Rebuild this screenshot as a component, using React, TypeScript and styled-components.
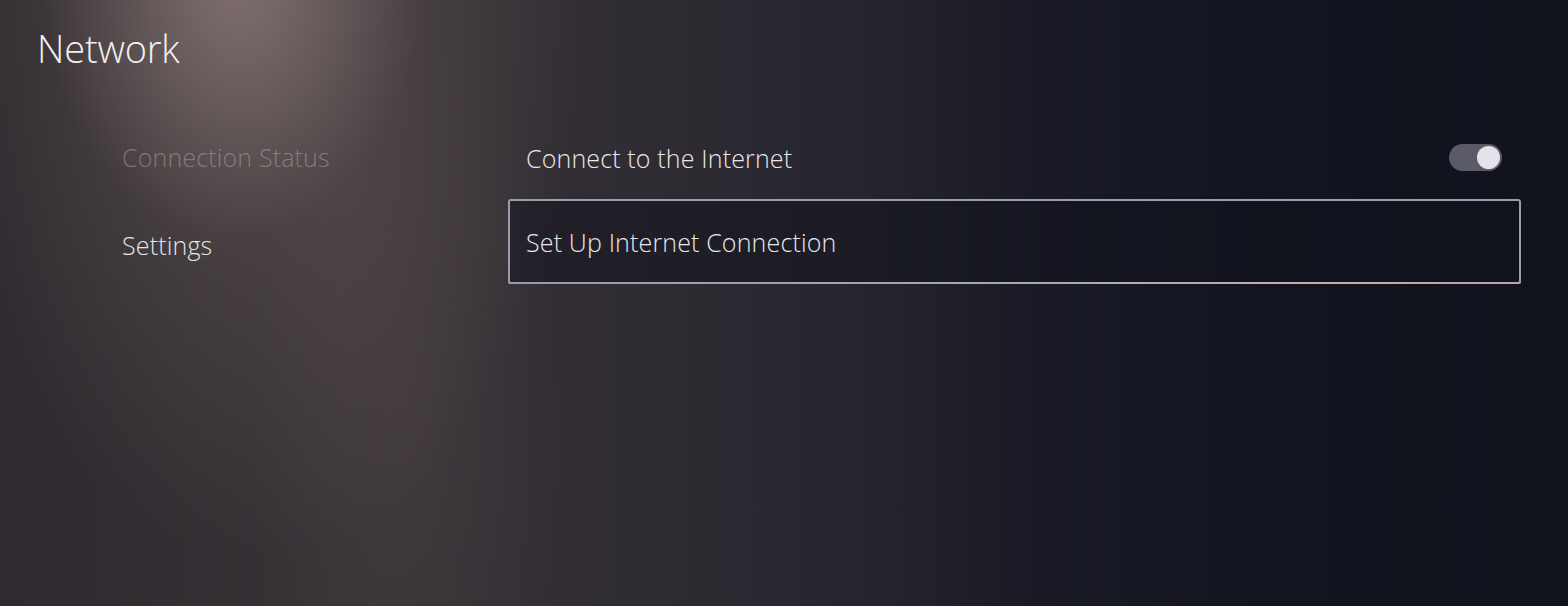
import React from "react";
import styled, { createGlobalStyle } from "styled-components";

const Global = createGlobalStyle`
  html, body { margin: 0; padding: 0; }
  body { background: #11131e; }
`;

const Screen = styled.div`
  width: 1568px;
  height: 606px;
  overflow: hidden;
  box-sizing: border-box;
  font-family: "Open Sans", "Noto Sans", sans-serif;
  font-weight: 300;
  color: #ecebee;
  padding: 22px 0 0 37px;
  background:
    radial-gradient(ellipse 190px 260px at 232px -20px, rgba(160, 140, 136, 0.55), rgba(160, 140, 136, 0) 100%),
    radial-gradient(ellipse 330px 560px at 260px 0px, rgba(120, 104, 102, 0.5), rgba(120, 104, 102, 0) 100%),
    radial-gradient(ellipse 160px 420px at 410px 430px, rgba(90, 78, 80, 0.3), rgba(90, 78, 80, 0) 100%),
    linear-gradient(90deg, #2e2a2f 0%, #373236 22%, #302c33 40%, #25252e 55%, #191a25 66%, #12141f 82%, #10121c 100%);
`;

const Title = styled.h1`
  margin: 0;
  font-size: 38px;
  font-weight: 300;
  line-height: 52px;
  letter-spacing: -0.2px;
  color: #f1eff1;
`;

const Body = styled.div`
  display: grid;
  grid-template-columns: 386px 1013px;
  margin-top: 41px;
  padding-left: 85px;
`;

const Nav = styled.nav`
  display: flex;
  flex-direction: column;
  padding-top: 16px;
`;

const NavItem = styled.div<{ $dim?: boolean }>`
  height: 88px;
  font-size: 25px;
  line-height: 52px;
  letter-spacing: 0.15px;
  color: ${(p) => (p.$dim ? "rgba(200, 192, 194, 0.42)" : "#e6e4e8")};
`;

const List = styled.div`
  display: flex;
  flex-direction: column;
`;

const Row = styled.div<{ $focused?: boolean }>`
  position: relative;
  height: 85px;
  box-sizing: border-box;
  display: flex;
  align-items: center;
  justify-content: space-between;
  padding: 0 17px 0 16px;
  font-size: 25px;
  letter-spacing: 0.15px;
  color: #e8e7ec;
  border-radius: 3px;
  border: 2px solid ${(p) => (p.$focused ? "#9c9caa" : "transparent")};
  background: ${(p) => (p.$focused ? "rgba(16, 18, 28, 0.5)" : "transparent")};
  margin-top: ${(p) => (p.$focused ? "-1px" : "0")};
`;

const BottomGlow = styled.span`
  position: absolute;
  left: -2px;
  right: -2px;
  bottom: -2px;
  height: 2px;
  border-radius: 0 0 3px 3px;
  background: linear-gradient(90deg, #9a9aa8 0%, #a9a7b2 50%, #c7b0a4 80%, #b9a4a0 100%);
`;

const Toggle = styled.div<{ $on?: boolean }>`
  width: 53px;
  height: 27px;
  border-radius: 14px;
  background: #5b5b68;
  display: flex;
  align-items: center;
  justify-content: ${(p) => (p.$on ? "flex-end" : "flex-start")};
  padding: 0 2px;
  box-sizing: border-box;
`;

const Knob = styled.div`
  width: 23px;
  height: 23px;
  border-radius: 50%;
  background: #e4e3e7;
`;

export default function App() {
  return (
    <>
      <Global />
      <Screen>
        <Title>Network</Title>
        <Body>
          <Nav>
            <NavItem $dim>Connection Status</NavItem>
            <NavItem>Settings</NavItem>
          </Nav>
          <List>
            <Row>
              <span>Connect to the Internet</span>
              <Toggle $on>
                <Knob />
              </Toggle>
            </Row>
            <Row $focused>
              <span>Set Up Internet Connection</span>
              <BottomGlow />
            </Row>
          </List>
        </Body>
      </Screen>
    </>
  );
}
